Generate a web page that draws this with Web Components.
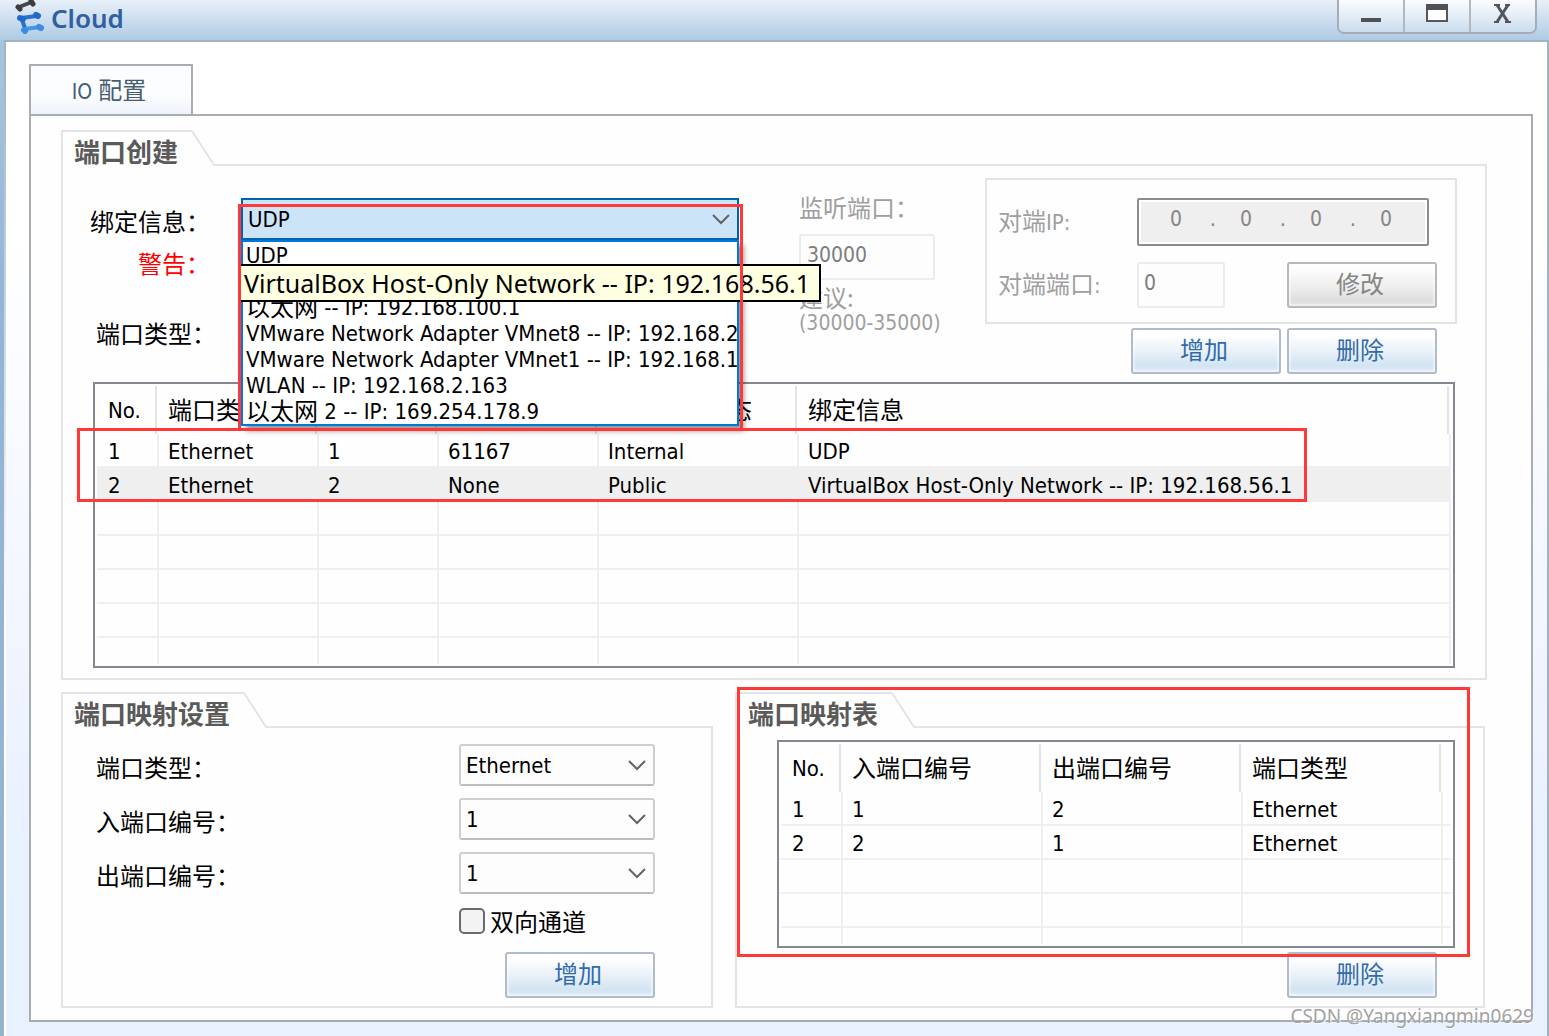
<!DOCTYPE html>
<html lang="zh-CN">
<head>
<meta charset="utf-8">
<meta name="viewport" content="width=device-width, initial-scale=1">
<title>Cloud</title>
<style>
  :root {
    --latin: "DejaVu Sans Condensed", "Noto Sans", "Noto Sans CJK SC", sans-serif;
    --cjk: "Noto Sans CJK SC", sans-serif;
    --ui: "Noto Sans", "Noto Sans CJK SC", sans-serif;
    --line: #e4e4e4;
    --red: #ff3838;
  }
  html, body { margin: 0; height: 100%; }
  body { font: 22px/26px var(--latin); color: #000; }
</style>
</head>
<body>
<app-window caption="Cloud">
  <tab-panel caption="配置" prefix="IO">
    <group-box caption="端口创建">
      <port-create></port-create>
    </group-box>
    <split-row>
      <group-box caption="端口映射设置">
        <map-settings></map-settings>
      </group-box>
      <group-box caption="端口映射表">
        <map-table></map-table>
        <mark-box slot="over" style="inset: -5px 15px 51px 2px"></mark-box>
      </group-box>
    </split-row>
  </tab-panel>
  <water-mark slot="over">CSDN @Yangxiangmin0629</water-mark>
</app-window>

<script>
const base = `<style>
  *, *::before, *::after { box-sizing: border-box; }
  :host { display: block; box-sizing: border-box; }
</style>`;

class Base extends HTMLElement {
  constructor() { super(); this.attachShadow({ mode: 'open' }); }
  connectedCallback() { this.shadowRoot.innerHTML = base + this.view(); }
  attr(name, fallback = '') { return this.getAttribute(name) ?? fallback; }
}

/* Window frame with its title bar */
customElements.define('app-window', class extends Base {
  view() { return `<style>
    :host { position: relative; min-height: 100vh; display: flex; flex-direction: column;
      background: linear-gradient(#a9c7e2, #92b5d8 30%, #97b3cc); }
    header { display: flex; align-items: flex-start; height: 40px; padding: 0 12px 0 14px;
      background: linear-gradient(#e8f0f9, #cfdff0 45%, #adcbe4); }
    .logo { width: 30px; height: 34px; flex: none; }
    h1 { flex: 1; margin: 0 0 0 7px; font: 600 26px/36px var(--ui); color: #2f609f; }
    .sys { display: flex; height: 34px; border: 2px solid #a9adb3; border-top: 0;
      border-radius: 0 0 7px 7px; overflow: hidden; }
    .sys button { width: 66px; padding: 0; border: 0; border-left: 2px solid #b3b8bf;
      background: linear-gradient(#fafcfe, #e4edf6 50%, #c9dcee); display: grid; place-items: start center; }
    .sys button:first-child { border-left: 0; width: 64px; }
    .sys svg { width: 24px; height: 24px; margin-top: 1px; }
    main { flex: 1; margin: 0 0 0 4px; padding: 22px 14px 14px 25px;
      border: 2px solid #a3b2bf; border-width: 2px 2px 0 0;
      background: linear-gradient(#a3b2bf, #fff 60%) left / 2px 100% no-repeat,
        linear-gradient(#fff 20%, #e9f0ff 80%); }
  </style>
  <header>
    <svg class="logo" viewBox="0 0 30 34" aria-hidden="true">
      <g fill="none" stroke-linecap="round">
        <path d="M5 7 18 2" stroke="#474747" stroke-width="4"/>
        <path d="M4 7l2 2M17 1l2 3" stroke="#3d3d3d" stroke-width="5"/>
        <path d="M7 18 23 16M8 20l3 8" stroke="#2673cf" stroke-width="4"/>
        <path d="M6 18l3 1M22 15l2 1" stroke="#1f6ac8" stroke-width="6"/>
        <path d="M11 29 26 27" stroke="#4795ea" stroke-width="4"/>
        <path d="M10 30l1 1M25 27l2 1" stroke="#3c8ae2" stroke-width="6"/>
      </g>
    </svg>
    <h1>${this.attr('caption')}</h1>
    <div class="sys">
      <button aria-label="最小化"><svg viewBox="0 0 24 24"><path d="M2 17h20v4H2z" fill="#505057"/></svg></button>
      <button aria-label="最大化"><svg viewBox="0 0 24 24"><path d="M2 4h20v16H2z" fill="#fff" stroke="#57575e" stroke-width="2"/><path d="M1 3h22v6H1z" fill="#505057"/></svg></button>
      <button aria-label="关闭"><svg viewBox="0 0 24 24"><path d="M6 4l11 17M17 4L6 21" stroke="#54545b" stroke-width="3"/><path d="M3 4h6M14 4h5M3 21h5M14 21h6" stroke="#54545b" stroke-width="2"/></svg></button>
    </div>
  </header>
  <main><slot></slot></main>
  <slot name="over"></slot>`; }
});

/* Tab strip with one tab and its page */
customElements.define('tab-panel', class extends Base {
  view() { return `<style>
    nav { display: flex; }
    button { width: 164px; height: 50px; padding: 0 4px 2px 0; border: 2px solid #a9adb1; border-bottom: 0;
      background: linear-gradient(#fafcff, #fcfdff 60%, #eef3fb); color: #465c72; font: 21px/46px var(--latin); }
    button span { font: 24px/46px var(--cjk); }
    section { padding: 14px 44px 12px 30px; border: 2px solid #a9adb1; background: #fefefe; }
  </style>
  <nav><button role="tab" aria-selected="true">${this.attr('prefix')} <span>${this.attr('caption')}</span></button></nav>
  <section><slot></slot></section>`; }
});

/* Two groups side by side */
customElements.define('split-row', class extends Base {
  view() { return `<style>
    :host { display: grid; grid-template-columns: 652fr 750fr; gap: 22px; padding: 12px 2px 0 0; }
  </style><slot></slot>`; }
});

/* Frame with a slanted caption tab */
customElements.define('group-box', class extends Base {
  view() { return `<style>
    :host { position: relative; display: flex; flex-direction: column; }
    header { display: flex; height: 36px; }
    h2 { margin: 0; padding: 0 14px 0 11px; border: 2px solid var(--line); border-width: 2px 0 0 2px;
      font: 700 26px/38px var(--cjk); color: #5a5a5a; white-space: nowrap; }
    svg { width: 23px; height: 36px; flex: none; }
    i { flex: 1; border: 2px solid var(--line); border-width: 2px 2px 0 0; margin-top: 34px; }
    section { flex: 1; border: 2px solid var(--line); border-top: 0; }
  </style>
  <header><h2>${this.attr('caption')}</h2>
    <svg viewBox="0 0 23 36" aria-hidden="true"><path d="M0 1 22 35h1" fill="none" stroke="#e4e4e4" stroke-width="2"/></svg><i></i></header>
  <section><slot></slot></section>
  <slot name="over"></slot>`; }
});

customElements.define('push-button', class extends Base {
  view() { return `<style>
    button { display: block; width: 150px; height: 46px; padding: 0 4px 4px 0; border: 2px solid #b1bbc9; border-radius: 3px;
      background: linear-gradient(#fff 10%, #eaf1f9 50%, #d3e4f2 85%, #e2ecf7); box-shadow: inset 0 0 0 2px #ffffff66;
      font: 24px/36px var(--cjk); color: #2f6cab; }
    button:disabled { border-color: #b9b9b9; color: #858585;
      background: linear-gradient(#fdfdfd 10%, #ececec 60%, #dedede 85%, #e6e6e6); }
  </style><button ${this.hasAttribute('disabled') ? 'disabled' : ''}><slot></slot></button>`; }
});

/* Label and drop-down; with an "options" list the drop-down is shown open */
customElements.define('combo-field', class extends Base {
  view() {
    const open = this.hasAttribute('open');
    const items = this.attr('options').split('|');
    const li = t => `<li role="option">${t.replace(/以太网/, '<b>以太网</b>')}</li>`;
    return `<style>
    :host { display: grid; grid-template-columns: var(--label-w) 1fr; align-items: center; }
    label { font: 24px/30px var(--cjk); white-space: nowrap; padding-left: var(--indent, 0px); padding-top: 4px; }
    .box { position: relative; display: grid; }
    select, .box > svg { grid-area: 1 / 1; }
    select { appearance: none; width: 100%; height: 42px; padding: 2px 40px 0 5px; border: 2px solid #cfcfcf;
      border-bottom-color: #bdbdbd; border-radius: 3px; background: #fdfdfd; font: 22px/26px var(--latin); color: #000; }
    :host([open]) select { border-color: #0063b1; border-radius: 0; background: #cce4f7; }
    .box > svg { width: 18px; height: 12px; justify-self: end; align-self: center; margin-right: 9px; pointer-events: none; }
    ul { position: absolute; z-index: 2; top: 100%; left: 0; right: 0; margin: 0; padding: 0; list-style: none;
      background: #fff; border: 2px solid #0078d7; box-shadow: 5px 5px 5px #0006; }
    li { height: 26px; line-height: 28px; padding-left: 3px; white-space: nowrap; overflow: hidden; }
    li b { font: 24px/0 var(--cjk); vertical-align: -1px; }
  </style>
  <label for="c">${this.attr('label')}</label>
  <div class="box">
    <select id="c"><option>${this.attr('value')}</option></select>
    <svg viewBox="0 0 18 12" aria-hidden="true"><path d="M1 2l8 8 8-8" fill="none" stroke="#5f6468" stroke-width="2"/></svg>
    ${open ? `<ul role="listbox">${items.map(li).join('')}</ul>` : ''}
    <slot></slot>
  </div>`; }
});

customElements.define('tool-tip', class extends Base {
  view() { return `<style>
    :host { position: absolute; z-index: 3; padding: 0 9px 0 3px; border: 2px solid #000; background: #ffffe1;
      font: 25px/34px var(--ui); white-space: nowrap; }
  </style><slot></slot>`; }
});

/* Red outline drawn over a region */
customElements.define('mark-box', class extends Base {
  view() { return `<style>
    :host { position: absolute; z-index: 4; border: 3px solid var(--red); pointer-events: none; }
  </style>`; }
});

customElements.define('water-mark', class extends Base {
  view() { return `<style>
    :host { position: absolute; right: 15px; bottom: 7px; font: 19px/26px var(--ui); color: #a2a2a2;
      text-shadow: 1px 1px 1px #fff; }
  </style><slot></slot>`; }
});

/* Dotted address entry made of four number boxes */
customElements.define('ip-field', class extends Base {
  view() {
    const one = n => `<input aria-label="对端IP ${n}" value="0" disabled>`;
    return `<style>
    :host { display: flex; height: 48px; padding: 2px 6px 8px 7px; width: 292px; border: 2px solid #8c8c8c; border-radius: 2px;
      background: #efefef; box-shadow: inset 0 0 0 2px #fff; }
    input { width: 60px; padding: 0; border: 0; background: none; text-align: center; font: 21px/26px var(--latin); color: #8a8585; }
    span { width: 10px; flex: none; text-align: right; line-height: 34px; color: #8a8585; }
  </style>${[1, 2, 3, 4].map(one).join('<span>.</span>')}`; }
});

/* Report grid: header, data rows, then empty ruled rows */
customElements.define('data-grid', class extends Base {
  view() {
    const cols = JSON.parse(this.attr('columns'));
    const rows = JSON.parse(this.attr('rows'));
    const blank = Number(this.attr('blank'));
    const wrap = t => t.replace(/[\u4e00-\u9fff]+/g, '<b>$&</b>');
    return `<style>
    :host { position: relative; border: 2px solid #828790; padding: 2px; background: #fefefe; }
    table { width: 100%; border-collapse: separate; border-spacing: 0; table-layout: fixed; }
    th, td { padding: 0; font-weight: 400; text-align: left; white-space: nowrap; overflow: hidden; }
    th div { height: 48px; margin-right: 2px; padding-left: 9px; border-right: 2px solid var(--line); line-height: 49px; }
    th b { font: 24px/0 var(--cjk); vertical-align: -1px; }
    td { height: 34px; padding: 4px 0 0 9px; border: solid #efefef; border-width: 0 2px 2px 0; }
    th:first-child div, td:first-child { padding-left: 11px; }
    .cut td { height: var(--cut); border-bottom: 0; }
    .sel td { background: #efefef; }
    .end { border-right: 0; padding: 0; }
    thead .end { border: 0; }
  </style>
  <table>
    <colgroup>${cols.map(c => `<col${c[1] ? ` style="width:${c[1]}px"` : ''}>`).join('')}</colgroup>
    <thead><tr>${cols.map(c => c[0] ? `<th><div>${wrap(c[0])}</div></th>` : '<td class="end"></td>').join('')}</tr></thead>
    <tbody>
    ${rows.map((r, i) => `<tr${String(i) === this.attr('selected') ? ' class="sel"' : ''}>${cols.map((c, j) => `<td${c[0] ? '' : ' class="end"'}>${r[j] ?? ''}</td>`).join('')}</tr>`).join('')}
    ${Array.from({ length: blank }, (_, i) => `<tr${i === blank - 1 ? ' class="cut"' : ''}>${cols.map(c => `<td${c[0] ? '' : ' class="end"'}></td>`).join('')}</tr>`).join('')}
    </tbody>
  </table><slot></slot>`; }
});

customElements.define('port-create', class extends Base {
  view() {
    const nets = ['UDP', '', '以太网 -- IP: 192.168.100.1',
      'VMware Network Adapter VMnet8 -- IP: 192.168.2.1', 'VMware Network Adapter VMnet1 -- IP: 192.168.13',
      'WLAN -- IP: 192.168.2.163', '以太网 2 -- IP: 169.254.178.9'].join('|');
    const cols = [['No.', 62], ['端口类型', 160], [' ', 120], [' ', 160], ['端口开放状态', 200], ['绑定信息', 0]];
    const rows = [['1', 'Ethernet', '1', '61167', 'Internal', 'UDP'],
      ['2', 'Ethernet', '2', 'None', 'Public', 'VirtualBox Host-Only Network -- IP: 192.168.56.1']];
    return `<style>
    :host { padding: 0 0 10px; }
    .form { display: flex; align-items: flex-start; padding: 12px 28px 8px 27px; }
    .bind { flex: 1; padding-top: 20px; --label-w: 151px; }
    .warn { margin: 8px 0 32px; padding-left: 48px; font: 24px/30px var(--cjk); color: #f00; }
    .type { --indent: 6px; width: 480px; }
    .listen { width: 186px; margin-left: 60px; font: 24px/30px var(--cjk); color: #9f9f9f; padding-top: 14px; }
    .listen input { display: block; width: 136px; height: 46px; margin: 12px 0 4px; padding: 0 6px 4px; }
    .listen p { margin: 0; line-height: 26px; }
    .listen p + p { font-family: var(--latin); font-size: 21px; }
    input { border: 2px solid #ececec; border-radius: 2px; background: #fdfdfd; font: 21px/26px var(--latin); color: #7d7d7d; }
    .side { width: 472px; }
    .peer { padding: 18px 18px 14px 11px; border: 2px solid var(--line); display: grid;
      grid-template-columns: 139px 1fr auto; row-gap: 16px; align-items: center; color: #9f9f9f; }
    .peer label { font: 24px/30px var(--cjk); padding-bottom: 2px; }
    .peer label span { font: 22px/30px var(--latin); }
    .peer ip-field { grid-column: 2 / 4; }
    .peer input { width: 88px; height: 46px; padding: 0 5px 4px; }
    .acts { display: flex; justify-content: flex-end; gap: 6px; padding: 4px 20px 0 0; }
    data-grid { margin: 0 30px; --cut: 26px; }
  </style>
  <div class="form">
    <div class="bind">
      <combo-field open label="绑定信息：" value="UDP" options="${nets}">
        <tool-tip style="top: 66px; left: -2px">VirtualBox Host-Only Network -- IP: 192.168.56.1</tool-tip>
        <mark-box style="inset: 6px -4px -191px -3px"></mark-box>
      </combo-field>
      <div class="warn">警告：</div>
      <combo-field class="type" label="端口类型：" value=""></combo-field>
    </div>
    <div class="listen">
      <label for="lp">监听端口：</label>
      <input id="lp" value="30000" disabled>
      <p>建议:</p><p>(30000-35000)</p>
    </div>
    <div class="side">
      <div class="peer">
        <label>对端<span>IP:</span></label><ip-field></ip-field>
        <label for="pp">对端端口<span>:</span></label><input id="pp" value="0" disabled>
        <push-button disabled>修改</push-button>
      </div>
      <div class="acts"><push-button>增加</push-button><push-button>删除</push-button></div>
    </div>
  </div>
  <data-grid columns='${JSON.stringify(cols)}' rows='${JSON.stringify(rows)}' blank="5" selected="1">
    <mark-box style="left: -18px; top: 44px; width: 1230px; height: 74px"></mark-box>
  </data-grid>`; }
});

customElements.define('map-settings', class extends Base {
  view() { return `<style>
    :host { padding: 16px 56px 8px 33px; display: flex; flex-direction: column; gap: 12px; }
    combo-field { grid-template-columns: 1fr 196px; }
    .two { display: flex; align-items: center; gap: 5px; align-self: flex-end; width: 196px; height: 26px; margin: 2px 0 6px; }
    .two input { appearance: none; width: 26px; height: 26px; margin: 0; border: 2px solid #6b6b6b; border-radius: 5px; background: #f3f3f3; }
    .two label { font: 24px/30px var(--cjk); }
    push-button { align-self: flex-end; }
  </style>
  <combo-field label="端口类型：" value="Ethernet"></combo-field>
  <combo-field label="入端口编号：" value="1"></combo-field>
  <combo-field label="出端口编号：" value="1"></combo-field>
  <div class="two"><input type="checkbox" id="b"><label for="b">双向通道</label></div>
  <push-button>增加</push-button>`; }
});

customElements.define('map-table', class extends Base {
  view() {
    const cols = [['No.', 62], ['入端口编号', 200], ['出端口编号', 200], ['端口类型', 200], ['', 0]];
    const rows = [['1', '1', '2', 'Ethernet'], ['2', '2', '1', 'Ethernet']];
    return `<style>
    :host { padding: 12px 28px 8px 40px; display: flex; flex-direction: column; gap: 4px; }
    data-grid { --cut: 16px; }
    push-button { align-self: flex-end; margin-right: 18px; }
  </style>
  <data-grid columns='${JSON.stringify(cols)}' rows='${JSON.stringify(rows)}' blank="3"></data-grid>
  <push-button>删除</push-button>`; }
});
</script>
</body>
</html>
